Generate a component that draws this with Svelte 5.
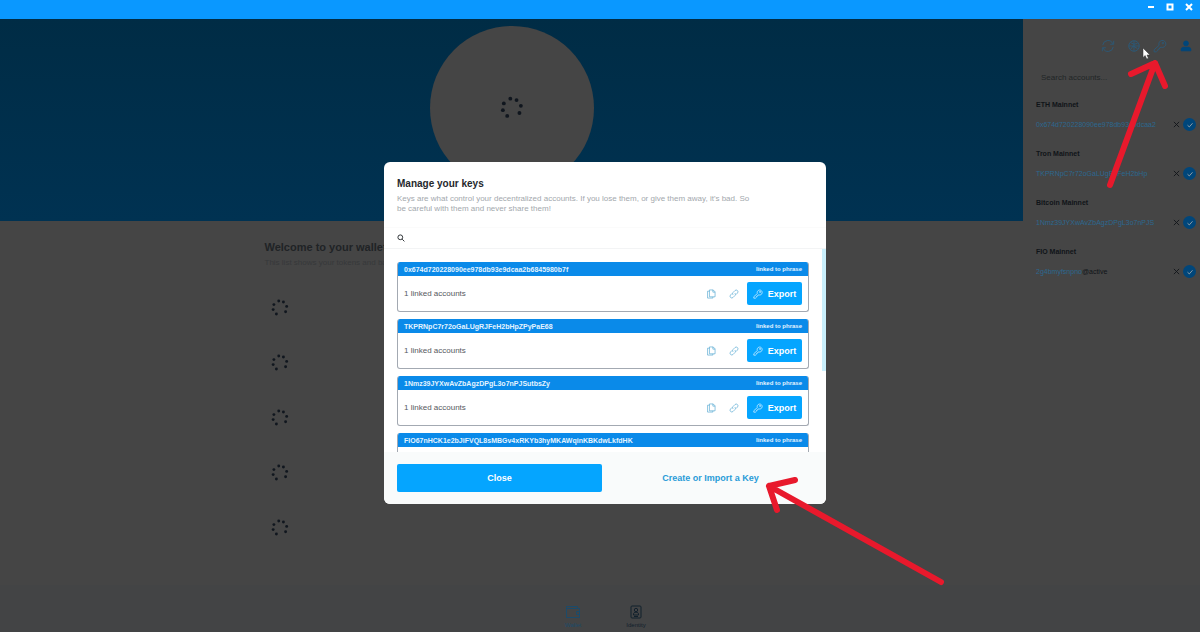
<script lang="ts">
  type Key = { id: string; accounts: number };
  type Account = { network: string; address: string; suffix?: string };

  const keys: Key[] = [
    { id: "0x674d720228090ee978db93e9dcaa2b6845980b7f", accounts: 1 },
    { id: "TKPRNpC7r72oGaLUgRJFeH2bHpZPyPaE68", accounts: 1 },
    { id: "1Nmz39JYXwAvZbAgzDPgL3o7nPJSutbsZy", accounts: 1 },
    { id: "FIO67nHCK1e2bJiFVQL8sMBGv4xRKYb3hyMKAWqinKBKdwLkfdHK", accounts: 1 },
  ];

  const accounts: Account[] = [
    { network: "ETH Mainnet", address: "0x674d720228090ee978db93e9dcaa2" },
    { network: "Tron Mainnet", address: "TKPRNpC7r72oGaLUgRJFeH2bHp" },
    { network: "Bitcoin Mainnet", address: "1Nmz39JYXwAvZbAgzDPgL3o7nPJS" },
    { network: "FIO Mainnet", address: "2g4bmyfsnpno", suffix: "@active" },
  ];

  const tokens = [1, 2, 3, 4, 5];

  let filter = $state("");
  let search = $state("");

  let visibleKeys = $derived(
    keys.filter((k) => k.id.toLowerCase().includes(filter.toLowerCase()))
  );
</script>

{#snippet spinner(size: number)}
  <svg class="spinner" width={size} height={size} viewBox="0 0 20 20" aria-hidden="true">
    <circle cx="8.6" cy="2.2" r="1.6" />
    <circle cx="13.8" cy="3.4" r="1.6" />
    <circle cx="17.4" cy="8.2" r="1.6" />
    <circle cx="16.2" cy="14.2" r="1.6" />
    <circle cx="6" cy="16.6" r="1.6" />
    <circle cx="2.4" cy="11.8" r="1.6" />
    <circle cx="3.2" cy="6.2" r="1.6" />
  </svg>
{/snippet}

{#snippet keyIcon(size: number)}
  <svg width={size} height={size} viewBox="0 0 16 16" aria-hidden="true">
    <path d="M7 7.2a4 4 0 1 1 2.3 2.2L7.8 9.8l-.5 1.6-1.6.4-.4 1.6-1.5 1.3H1.3v-2.4z" />
    <circle cx="11.3" cy="4.7" r="0.9" />
  </svg>
{/snippet}

<div class="app">
  <header class="titlebar">
    <button aria-label="Minimize">
      <svg width="8" height="8" viewBox="0 0 8 8"><path d="M1 4h6" /></svg>
    </button>
    <button aria-label="Maximize">
      <svg width="8" height="8" viewBox="0 0 8 8"><path d="M1.5 1.5h5v5h-5z" /></svg>
    </button>
    <button aria-label="Close window">
      <svg width="8" height="8" viewBox="0 0 8 8"><path d="M1 1l6 6M7 1L1 7" /></svg>
    </button>
  </header>

  <div class="body">
    <main>
      <section class="hero">
        <div class="chart">{@render spinner(24)}</div>
      </section>
      <section class="wallet">
        <h1>Welcome to your wallet</h1>
        <p>This list shows your tokens and balances</p>
        <ul>
          {#each tokens as token (token)}
            <li>{@render spinner(18)}</li>
          {/each}
        </ul>
      </section>
    </main>

    <aside>
      <div class="tools">
        <button aria-label="Refresh">
          <svg width="14" height="14" viewBox="0 0 16 16">
            <path d="M2 7a6 6 0 0 1 11.5-1.5M14.5 2v4h-4M14 9a6 6 0 0 1-11.5 1.5M1.5 14v-4h4" />
          </svg>
        </button>
        <button aria-label="Networks">
          <svg width="14" height="14" viewBox="0 0 16 16">
            <circle cx="8" cy="8" r="6" />
            <path d="M8 2v12M2 8h12M4 4l4 2 4-1M4 12l3-4 5 3" />
          </svg>
        </button>
        <button aria-label="Keys">{@render keyIcon(14)}</button>
        <button class="user" aria-label="Profile">
          <svg width="14" height="14" viewBox="0 0 16 16">
            <circle cx="8" cy="5" r="2.8" />
            <path d="M2.5 13.5V12c0-1.500 1-2.500 2.500-2.500h6c1.500 0 2.500 1 2.500 2.500v1.500z" />
          </svg>
        </button>
      </div>
      <input class="search" type="text" placeholder="Search accounts..." aria-label="Search accounts" bind:value={search} />
      <ul class="accounts">
        {#each accounts as account (account.network)}
          <li>
            <h2>{account.network}</h2>
            <div class="account">
              <span class="address"
                >{account.address}{#if account.suffix}<b>{account.suffix}</b>{/if}</span
              >
              <button class="remove" aria-label="Remove {account.network}">
                <svg width="7" height="7" viewBox="0 0 8 8"><path d="M1 1l6 6M7 1L1 7" /></svg>
              </button>
              <button class="check" aria-label="Use {account.network}">
                <svg width="8" height="8" viewBox="0 0 8 8"><path d="M1.5 4.2l1.8 1.7 3.2-3.6" /></svg>
              </button>
            </div>
          </li>
        {/each}
      </ul>
    </aside>
  </div>

  <nav>
    <a class="active" href="#wallet">
      <svg width="16" height="14" viewBox="0 0 16 14" aria-hidden="true">
        <path d="M1.5 3.5h13v9h-13zM1.5 3.5v-2h11v2M14.5 6.5h-3v3h3" />
      </svg>
      Wallet
    </a>
    <a href="#identity">
      <svg width="12" height="14" viewBox="0 0 12 14" aria-hidden="true">
        <rect x="1" y="1" width="10" height="12" rx="1" />
        <circle cx="6" cy="5" r="1.7" />
        <path d="M3.5 10V9c0-1 1-1.8 2.5-1.8S8.5 8 8.5 9v1zM4 11.5h4" />
      </svg>
      Identity
    </a>
  </nav>

  <div class="overlay">
    <div class="dialog" role="dialog" aria-modal="true" aria-labelledby="keys-title">
      <div class="intro">
        <h2 id="keys-title">Manage your keys</h2>
        <p>
          Keys are what control your decentralized accounts. If you lose them, or give them away, it's bad. So
          be careful with them and never share them!
        </p>
      </div>

      <label class="filter">
        <svg width="8" height="8" viewBox="0 0 8 8" aria-hidden="true">
          <circle cx="3.3" cy="3.3" r="2.4" />
          <path d="M5.2 5.2L7.4 7.4" />
        </svg>
        <input type="text" aria-label="Search keys" bind:value={filter} />
      </label>

      <div class="scroller">
        <ul class="keys">
          {#each visibleKeys as key (key.id)}
            <li class="key">
              <div class="key-head">
                <span>{key.id}</span>
                <small>linked to phrase</small>
              </div>
              <div class="key-body">
                <span class="linked">{key.accounts} linked accounts</span>
                <button class="icon" aria-label="Copy key">
                  <svg width="10" height="10" viewBox="0 0 16 16">
                    <path d="M5.5 1.5h6l3 3v8h-9zM11 1.5V5h3.5M5.5 3.5h-3v11h8.5v-2" />
                  </svg>
                </button>
                <button class="icon" aria-label="Show linked accounts">
                  <svg width="10" height="10" viewBox="0 0 16 16">
                    <path d="M6.5 9.5a3 3 0 0 1 0-4L9.5 2.5a2.8 2.8 0 0 1 4 4L11 9M9.500 6.500a3 3 0 0 1 0 4l-3 3a2.800 2.800 0 0 1-4-4L5 7" />
                  </svg>
                </button>
                <button class="export">{@render keyIcon(10)}Export</button>
              </div>
            </li>
          {/each}
        </ul>
        <span class="thumb"></span>
      </div>

      <footer>
        <button class="close">Close</button>
        <button class="create">Create or Import a Key</button>
      </footer>

      <svg class="arrow arrow-create" width="186" height="120" viewBox="0 0 186 120" aria-hidden="true">
        <path d="M179 108L7 12M33 6L7 12L15 36" />
      </svg>
    </div>
  </div>

  <svg class="arrow arrow-keys" width="70" height="136" viewBox="0 0 70 136" aria-hidden="true">
    <path d="M10 130L55 8M31 19L55 8L65 31" />
  </svg>
  <svg class="pointer" width="9" height="13" viewBox="0 0 9 13" aria-hidden="true">
    <path d="M1 1v9.5l2.2-2 1.5 3.5 1.7-.7L5 8h3z" />
  </svg>
</div>

<style>
  :global(body) {
    background: #454545;
  }

  .app {
    position: relative;
    display: flex;
    flex-direction: column;
    min-height: 100vh;
    overflow: hidden;
    background: #454545;
    color: #202326;
    font-family: "Liberation Sans", Arial, sans-serif;
    font-size: 8px;
  }

  button,
  input {
    margin: 0;
    padding: 0;
    border: 0;
    background: none;
    color: inherit;
    font: inherit;
  }

  button {
    display: flex;
    align-items: center;
    justify-content: center;
    cursor: pointer;
  }

  h1,
  h2,
  p,
  ul {
    margin: 0;
    padding: 0;
    list-style: none;
  }

  svg {
    display: block;
    flex: none;
    fill: none;
    stroke: currentColor;
  }

  .titlebar {
    display: flex;
    justify-content: flex-end;
    gap: 11px;
    height: 19px;
    padding: 0 7px 5px 0;
    box-sizing: border-box;
    background: #0a98ff;
    color: #fff;
  }

  .titlebar svg {
    stroke-width: 2;
  }

  .body {
    display: flex;
    flex: 1;
  }

  main {
    flex: 1;
  }

  .hero {
    display: flex;
    justify-content: center;
    height: 202px;
    padding-top: 7px;
    box-sizing: border-box;
    background: linear-gradient(#002c45, #003252);
  }

  .chart {
    display: flex;
    align-items: center;
    justify-content: center;
    width: 164px;
    height: 164px;
    border-radius: 50%;
    background: #454545;
  }

  .spinner {
    fill: #10161e;
    stroke: none;
  }

  .wallet {
    max-width: 494px;
    margin: 0 auto;
    padding-top: 20px;
  }

  .wallet h1 {
    font-size: 11px;
    line-height: 13px;
  }

  .wallet p {
    margin-top: 4px;
    color: #36383a;
    line-height: 10px;
  }

  .wallet ul {
    display: grid;
    gap: 15px;
    margin-top: 20px;
  }

  .wallet li {
    display: grid;
    place-items: center;
    width: 30px;
    height: 40px;
  }

  aside {
    width: 177px;
    padding: 20px 4px 0 13px;
    box-sizing: border-box;
  }

  .tools {
    display: flex;
    justify-content: flex-end;
    gap: 12px;
    padding-right: 3px;
    color: #2a5a7a;
  }

  .tools .user {
    color: #00467a;
  }

  .user svg {
    fill: currentColor;
  }

  .search {
    display: block;
    width: 100%;
    height: 24px;
    margin-top: 12px;
    padding: 0 5px;
    box-sizing: border-box;
  }

  .search::placeholder {
    color: #222527;
    opacity: 1;
  }

  .accounts {
    display: grid;
    grid-template-columns: minmax(0, 1fr);
    gap: 19px;
    margin-top: 12px;
    font-size: 7px;
  }

  .accounts h2 {
    color: #101418;
    font-size: 7px;
    line-height: 8px;
  }

  .account {
    display: flex;
    align-items: center;
    gap: 3px;
    height: 13px;
    margin-top: 9px;
    color: #101418;
  }

  .address {
    flex: 1;
    min-width: 0;
    color: #2c6890;
  }

  .address b {
    color: #101418;
    font-weight: 400;
  }

  .check {
    width: 13px;
    height: 13px;
    border-radius: 50%;
    background: #00467a;
    color: #8d9ca6;
  }

  nav {
    display: flex;
    justify-content: center;
    gap: 24px;
    height: 47px;
    padding: 20px 0 0 9px;
    box-sizing: border-box;
    background: #434445;
  }

  nav a {
    display: flex;
    flex-direction: column;
    align-items: center;
    gap: 2px;
    width: 39px;
    color: #11202c;
    font-size: 6px;
    line-height: 8px;
    text-decoration: none;
  }

  nav .active {
    color: #1c4b6a;
  }

  .overlay {
    position: absolute;
    inset: 19px 0 0;
    display: flex;
    align-items: center;
    justify-content: center;
    padding: 15px 0 0 10px;
  }

  .dialog {
    position: relative;
    width: 442px;
    border-radius: 6px;
    background: #fff;
  }

  .intro {
    padding: 16px 70px 13px 13px;
  }

  .intro h2 {
    color: #25282c;
    font-size: 10px;
    line-height: 12px;
  }

  .intro p {
    margin-top: 4px;
    color: #a3a8ad;
    line-height: 10px;
  }

  .filter {
    display: flex;
    align-items: center;
    gap: 6px;
    height: 22px;
    padding: 0 13px;
    border-top: 1px solid #fbfbfb;
    border-bottom: 1px solid #f3f4f5;
    box-sizing: border-box;
    color: #33373b;
  }

  .filter input {
    flex: 1;
    outline: none;
  }

  .scroller {
    display: flex;
    height: 203px;
    overflow: hidden;
  }

  .keys {
    display: flex;
    flex: 1;
    flex-direction: column;
    gap: 7px;
    padding: 13px 13px 0;
  }

  .thumb {
    width: 4px;
    height: 60%;
    background: #c9effc;
  }

  .key {
    flex: none;
    border: 1px solid #a3a9b2;
    border-top: 0;
    border-radius: 3px;
    overflow: hidden;
  }

  .key-head {
    display: flex;
    align-items: center;
    justify-content: space-between;
    height: 14px;
    margin: 0 -1px;
    padding: 0 7px;
    background: #0a8ae9;
    color: #e4f4ff;
    font-size: 7px;
    font-weight: 700;
  }

  .key-head small {
    font-size: 6px;
  }

  .key-body {
    display: flex;
    align-items: center;
    gap: 7px;
    height: 35px;
    padding: 0 6px;
  }

  .linked {
    flex: 1;
    color: #55595e;
  }

  .icon {
    width: 16px;
    height: 16px;
    color: #4ba3cf;
  }

  .icon + .export {
    margin-left: -2px;
  }

  .export {
    gap: 5px;
    width: 55px;
    height: 23px;
    border-radius: 2px;
    background: #05a5ff;
    color: #fff;
    font-size: 9px;
    font-weight: 700;
  }

  footer {
    display: grid;
    grid-template-columns: 1fr 1fr;
    gap: 6px;
    padding: 12px 13px;
    border-radius: 0 0 6px 6px;
    background: #f9fbfb;
    font-size: 9px;
    font-weight: 700;
  }

  footer button {
    height: 28px;
    border-radius: 2px;
  }

  .close {
    background: #05a5ff;
    color: #fff;
  }

  .create {
    color: #2a9bd8;
  }

  .arrow {
    position: absolute;
    stroke: #e8192c;
    stroke-width: 6;
    stroke-linecap: round;
    stroke-linejoin: round;
    pointer-events: none;
  }

  .arrow-create {
    top: 312px;
    left: 378px;
  }

  .arrow-keys {
    top: 55px;
    right: 30px;
  }

  .pointer {
    position: absolute;
    top: 47px;
    right: 49px;
    fill: #fff;
    stroke: #333;
    stroke-width: 0.5;
  }
</style>
